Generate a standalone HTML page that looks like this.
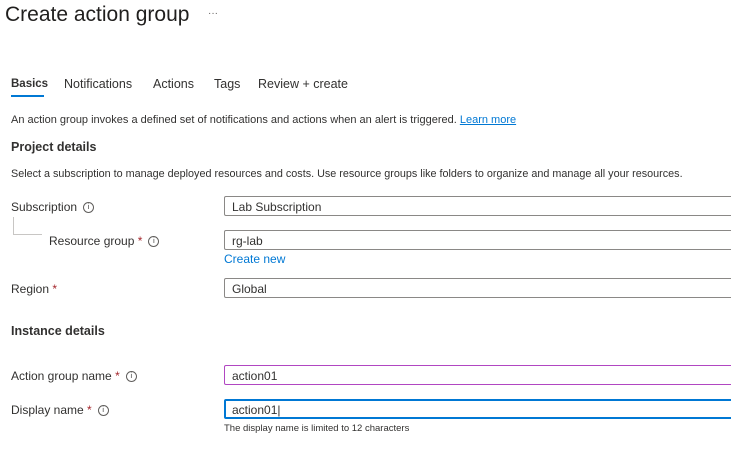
<!DOCTYPE html>
<html><head><style>
body{margin:0;width:731px;height:472px;background:#fff;font-family:"Liberation Sans",sans-serif;color:#323130;position:relative;overflow:hidden}
.a{position:absolute;white-space:nowrap}
.t{font-size:12px}
.in{position:absolute;left:224px;width:520px;height:20px;border:1px solid #8a8886;border-radius:2px;box-sizing:border-box;font-size:12px;padding:3px 0 0 7px}
.i{display:inline-block;width:9px;height:9px;border:1px solid #605e5c;border-radius:50%;font-size:7px;text-align:center;line-height:9px;vertical-align:middle;margin-left:6px}
.r{color:#a4262c}
</style></head><body>
<div class="a" style="left:5px;top:3px;font-size:21px;color:#201f1e">Create action group</div>
<div class="a" style="left:208px;top:8px;font-size:10px;color:#605e5c">···</div>
<div class="a" style="left:11px;top:78px;font-weight:bold;font-size:11.5px">Basics</div>
<div class="a t" style="left:64px;top:77px;font-size:12.5px">Notifications</div>
<div class="a t" style="left:153px;top:77px;font-size:12.5px">Actions</div>
<div class="a t" style="left:214px;top:77px;font-size:12.5px">Tags</div>
<div class="a t" style="left:258px;top:77px;font-size:12.5px">Review + create</div>
<div class="a" style="left:11px;top:95px;width:33px;height:2px;background:#0078d4"></div>
<div class="a" style="left:11px;top:114px;font-size:11px">An action group invokes a defined set of notifications and actions when an alert is triggered. <span style="color:#0078d4;text-decoration:underline">Learn more</span></div>
<div class="a" style="left:11px;top:140px;font-size:12.5px;font-weight:bold">Project details</div>
<div class="a" style="left:11px;top:168px;font-size:10.8px">Select a subscription to manage deployed resources and costs. Use resource groups like folders to organize and manage all your resources.</div>
<div class="a t" style="left:11px;top:200px">Subscription<span class="i">i</span></div>
<div class="a" style="left:13px;top:217px;width:28px;height:17px;border-left:1px solid #c8c6c4;border-bottom:1px solid #c8c6c4"></div>
<div class="a t" style="left:49px;top:234px">Resource group <span class="r">*</span><span class="i">i</span></div>
<div class="a t" style="left:11px;top:282px">Region <span class="r">*</span></div>
<div class="in" style="top:196px">Lab Subscription</div>
<div class="in" style="top:230px">rg-lab</div>
<div class="a t" style="left:224px;top:252px;color:#0078d4">Create new</div>
<div class="in" style="top:278px">Global</div>
<div class="a" style="left:11px;top:324px;font-size:12.5px;font-weight:bold">Instance details</div>
<div class="a t" style="left:11px;top:369px">Action group name <span class="r">*</span><span class="i">i</span></div>
<div class="in" style="top:365px;border-color:#b146c2">action01</div>
<div class="a t" style="left:11px;top:403px">Display name <span class="r">*</span><span class="i">i</span></div>
<div class="in" style="top:399px;height:20px;border:2px solid #0078d4;padding:2px 0 0 6px">action01|</div>
<div class="a" style="left:224px;top:423px;font-size:9.5px">The display name is limited to 12 characters</div>
</body></html>
